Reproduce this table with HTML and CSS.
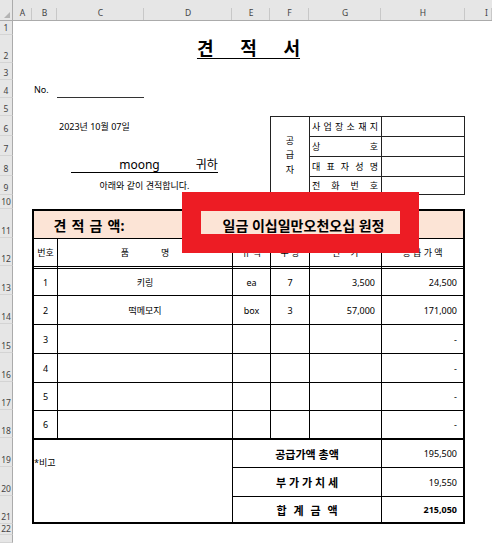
FILE: index.html
```html
<!DOCTYPE html>
<html lang="ko">
<head>
<meta charset="utf-8">
<title>견적서</title>
<link rel="stylesheet" href="styles.css">
</head>
<body>
<div class="sheet">
  <div class="corner"><svg width="6" height="6" viewBox="0 0 6 6"><polygon points="6,0 6,6 0,6" fill="#b4b4b4"/></svg></div>
  <div class="ch">A</div>
  <div class="ch">B</div>
  <div class="ch">C</div>
  <div class="ch">D</div>
  <div class="ch">E</div>
  <div class="ch">F</div>
  <div class="ch">G</div>
  <div class="ch">H</div>
  <div class="ch ch-last">I</div>

  <div class="rh">1</div>
  <div class="rh">2</div>
  <div class="rh">3</div>
  <div class="rh">4</div>
  <div class="rh">5</div>
  <div class="rh">6</div>
  <div class="rh">7</div>
  <div class="rh">8</div>
  <div class="rh">9</div>
  <div class="rh">10</div>
  <div class="rh">11</div>
  <div class="rh">12</div>
  <div class="rh">13</div>
  <div class="rh">14</div>
  <div class="rh">15</div>
  <div class="rh">16</div>
  <div class="rh">17</div>
  <div class="rh">18</div>
  <div class="rh">19</div>
  <div class="rh">20</div>
  <div class="rh">21</div>
  <div class="rh rh-short">22</div>
  <div class="rh"></div>

  <div class="title"><span>견 적 서</span></div>
  <div class="no-label">No.</div>
  <div class="no-field"></div>
  <div class="date">2023년 10월 07일</div>
  <div class="to"><span class="to-line"><span>moong</span><span>귀하</span></span></div>
  <div class="intro">아래와 같이 견적합니다.</div>

  <div class="supplier">
    <div class="sup-side"><span>공</span><span>급</span><span>자</span></div>
    <div class="sup-label"><span>사</span><span>업</span><span>장</span><span>소</span><span>재</span><span>지</span></div>
    <div class="sup-val"></div>
    <div class="sup-label sup-line"><span>상</span><span>호</span></div>
    <div class="sup-val sup-line"></div>
    <div class="sup-label sup-line"><span>대</span><span>표</span><span>자</span><span>성</span><span>명</span></div>
    <div class="sup-val sup-line"></div>
    <div class="sup-label sup-line"><span>전</span><span>화</span><span>번</span><span>호</span></div>
    <div class="sup-val sup-line"></div>
  </div>

  <div class="quote">
    <div class="amt amt-label">견 적 금 액:</div>
    <div class="amt amt-value">일금 이십일만오천오십 원정</div>

    <div class="cell bt">번호</div>
    <div class="cell span2 bl bt item-head"><span>품</span><span>명</span></div>
    <div class="cell bl bt">규 격</div>
    <div class="cell bl bt">수 량</div>
    <div class="cell bl bt unit-head"><span>단</span><span>가</span></div>
    <div class="cell bl bt">공 급 가 액</div>

    <div class="cell bt-dbl">1</div>
    <div class="cell span2 bl bt-dbl">키링</div>
    <div class="cell bl bt-dbl">ea</div>
    <div class="cell bl bt-dbl">7</div>
    <div class="cell num bl bt-dbl">3,500</div>
    <div class="cell num bl bt-dbl">24,500</div>

    <div class="cell bt">2</div>
    <div class="cell span2 bl bt">떡메모지</div>
    <div class="cell bl bt">box</div>
    <div class="cell bl bt">3</div>
    <div class="cell num bl bt">57,000</div>
    <div class="cell num bl bt">171,000</div>

    <div class="cell bt">3</div>
    <div class="cell span2 bl bt"></div>
    <div class="cell bl bt"></div>
    <div class="cell bl bt"></div>
    <div class="cell num bl bt"></div>
    <div class="cell num bl bt">-</div>

    <div class="cell bt">4</div>
    <div class="cell span2 bl bt"></div>
    <div class="cell bl bt"></div>
    <div class="cell bl bt"></div>
    <div class="cell num bl bt"></div>
    <div class="cell num bl bt">-</div>

    <div class="cell bt">5</div>
    <div class="cell span2 bl bt"></div>
    <div class="cell bl bt"></div>
    <div class="cell bl bt"></div>
    <div class="cell num bl bt"></div>
    <div class="cell num bl bt">-</div>

    <div class="cell bt">6</div>
    <div class="cell span2 bl bt"></div>
    <div class="cell bl bt"></div>
    <div class="cell bl bt"></div>
    <div class="cell num bl bt"></div>
    <div class="cell num bl bt">-</div>

    <div class="cell note bt-thick">*비고</div>
    <div class="cell span3 sum-label bl bt-thick">공급가액 총액</div>
    <div class="cell num bl bt-thick">195,500</div>
    <div class="cell span3 sum-label bl bt">부 가 가 치 세</div>
    <div class="cell num bl bt">19,550</div>
    <div class="cell span3 sum-label bl bt wide">합 계 금 액</div>
    <div class="cell num bl bt bold">215,050</div>
  </div>

  <div class="annot"></div>
</div>
</body>
</html>
```

FILE: styles.css
```css
* {
  box-sizing: border-box;
  margin: 0;
  padding: 0;
}

html, body {
  background: #fff;
}

body {
  font-family: "Noto Sans", "Noto Sans CJK KR", sans-serif;
  color: #000;
  width: 492px;
  height: 543px;
  overflow: hidden;
}

.sheet {
  position: relative;
  display: grid;
  grid-template-columns: 13px 19px 25px 87px 88px 38px 39px 72px 84px 27px;
  grid-template-rows: 21px 14px 28px 17px 18px 18px 20px 20px 20px 19px 14px 29px 28px 29px 29px 29px 29px 28px 28px 29px 29px 28px 11px 8px;
  width: 492px;
  height: 543px;
  background: #fff;
}

/* headers */
.corner {
  grid-area: 1 / 1 / 2 / 2;
  background: #e6e6e6;
  border-right: 1px solid #ababab;
  border-bottom: 1px solid #ababab;
  display: flex;
  align-items: flex-end;
  justify-content: flex-end;
  padding: 0 2px 2px 0;
}

.corner svg {
  display: block;
}

.ch {
  grid-row: 1;
  background: linear-gradient(#c8c8c8, #c8c8c8) right bottom / 1px 12px no-repeat, #e6e6e6;
  border-bottom: 1px solid #ababab;
  display: flex;
  align-items: flex-end;
  justify-content: center;
  padding-bottom: 3px;
  font-size: 8.5px;
  line-height: 1;
  color: #444;
}

.ch-last {
  justify-content: flex-start;
  padding-left: 20px;
}

.rh {
  grid-column: 1;
  background: #e6e6e6;
  border-right: 1px solid #ababab;
  border-bottom: 1px solid #d4d4d4;
  display: flex;
  align-items: flex-end;
  justify-content: center;
  padding-bottom: 2px;
  font-size: 8.5px;
  line-height: 8px;
  color: #444;
  overflow: hidden;
}

.rh-short {
  padding-bottom: 1px;
}

/* top area */
.title {
  grid-area: 3 / 3 / 4 / 10;
  display: flex;
  align-items: flex-end;
  justify-content: center;
  padding-bottom: 5px;
  font-size: 18px;
  font-weight: 700;
  line-height: 20px;
}

.title span {
  word-spacing: 22px;
  text-decoration: underline;
  text-decoration-thickness: 1px;
  text-underline-offset: 3px;
}

.no-label {
  grid-area: 5 / 3 / 6 / 4;
  display: flex;
  align-items: flex-end;
  padding: 0 0 3px 2px;
  font-size: 9px;
  line-height: 11px;
}

.no-field {
  grid-area: 5 / 4 / 6 / 5;
  border-bottom: 1px solid #333;
}

.date {
  grid-area: 7 / 4 / 8 / 6;
  display: flex;
  align-items: center;
  padding-left: 2px;
  font-size: 9px;
  white-space: nowrap;
}

.to {
  grid-area: 9 / 4 / 10 / 6;
  display: flex;
  align-items: flex-end;
  justify-content: center;
  padding-bottom: 3px;
}

.to-line {
  display: inline-flex;
  gap: 36px;
  padding-left: 48px;
  border-bottom: 1px solid #000;
  font-size: 12px;
  line-height: 15px;
}

.intro {
  grid-area: 10 / 4 / 11 / 6;
  display: flex;
  align-items: center;
  justify-content: center;
  font-size: 9px;
  white-space: nowrap;
}

/* supplier block */
.supplier {
  grid-area: 7 / 7 / 11 / 10;
  display: grid;
  grid-template-columns: 38px 72px 83px;
  grid-template-rows: 19px 20px 20px 18px;
  border: 1px solid #222;
  font-size: 9px;
}

.sup-side {
  grid-row: 1 / 5;
  display: flex;
  flex-direction: column;
  align-items: center;
  justify-content: center;
  line-height: 14.5px;
}

.sup-label {
  display: flex;
  align-items: center;
  justify-content: space-between;
  padding: 0 3px 0 2px;
  border-left: 1px solid #222;
}

.sup-val {
  border-left: 1px solid #222;
}

.sup-line {
  border-top: 1px solid #222;
}

/* quote table */
.quote {
  grid-area: 12 / 3 / 23 / 10;
  display: grid;
  grid-template-columns: 23px 87px 88px 38px 39px 72px 82px;
  grid-template-rows: 27px 28px 29px 29px 29px 29px 28px 28px 29px 29px 26px;
  border: 2px solid #000;
  font-size: 9px;
}

.amt {
  background: #fce4d6;
  font-size: 14px;
  font-weight: 700;
  display: flex;
  align-items: center;
  justify-content: center;
  white-space: nowrap;
}

.amt-label {
  grid-column: span 2;
  word-spacing: 1.5px;
}

.amt-value {
  grid-column: span 5;
}

.cell {
  display: flex;
  align-items: center;
  justify-content: center;
  white-space: nowrap;
}

.span2 {
  grid-column: span 2;
}

.span3 {
  grid-column: span 3;
}

.item-head {
  gap: 32px;
}

.unit-head {
  gap: 10px;
}

.bl {
  border-left: 1px solid #000;
}

.bt {
  border-top: 1px solid #000;
}

.bt-dbl {
  border-top: 3px double #000;
}

.bt-thick {
  border-top: 2px solid #000;
}

.num {
  justify-content: flex-end;
  padding-right: 6px;
}

.note {
  grid-row: span 3;
  grid-column: span 3;
  align-items: flex-start;
  justify-content: flex-start;
  padding-top: 16px;
}

.sum-label {
  font-size: 11px;
  font-weight: 700;
}

.wide {
  word-spacing: 4px;
}

.bold {
  font-weight: 700;
}

/* red annotation box drawn over the sheet */
.annot {
  position: absolute;
  left: 182px;
  top: 192px;
  width: 237px;
  height: 61px;
  border: 19px solid #ed1c24;
  z-index: 10;
}
```
